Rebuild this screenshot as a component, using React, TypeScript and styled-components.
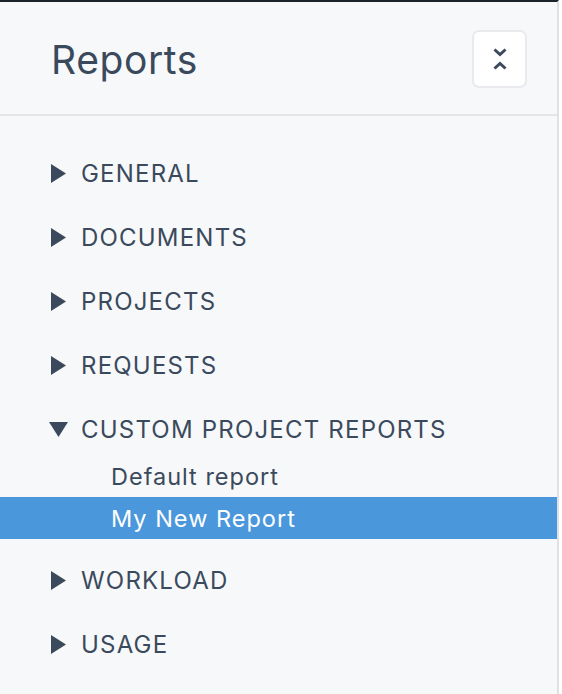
import React, { useState } from "react";
import styled, { createGlobalStyle } from "styled-components";

const Global = createGlobalStyle`
  html, body { margin: 0; padding: 0; background: #ffffff; }
  body { font-family: Inter, "Liberation Sans", Arial, sans-serif; }
`;

const Panel = styled.aside`
  width: 557px;
  height: 692px;
  background: #f7f8fa;
  border-top: 2px solid #1d232a;
  border-right: 2px solid #dfe1e4;
  color: #3a4a5c;
`;

const Header = styled.header`
  height: 112px;
  display: flex;
  align-items: center;
  justify-content: space-between;
  padding: 0 30px 0 51px;
  border-bottom: 2px solid #e3e5e8;
`;

const Title = styled.h1`
  margin: 3px 0 0;
  font-size: 39px;
  font-weight: 400;
  letter-spacing: 0.6px;
  color: #3a4a5c;
`;

const CollapseButton = styled.button`
  width: 55px;
  height: 58px;
  margin-top: 2px;
  display: flex;
  align-items: center;
  justify-content: center;
  background: #ffffff;
  border: 2px solid #e8eaed;
  border-radius: 7px;
  padding: 0;
  cursor: pointer;
`;

const List = styled.nav`
  display: flex;
  flex-direction: column;
  gap: 20px;
  padding-top: 35px;
`;

const Section = styled.div`
  display: flex;
  flex-direction: column;
`;

const SectionHead = styled.div`
  height: 44px;
  display: flex;
  align-items: center;
  padding-left: 51px;
  gap: 15px;
  font-size: 24px;
  letter-spacing: 1.2px;
  text-transform: uppercase;
  cursor: pointer;
`;

const Caret = styled.span<{ $open: boolean }>`
  width: 15px;
  height: 20px;
  display: flex;
  align-items: center;
  justify-content: center;
  flex: none;
  svg { transform: rotate(${(p) => (p.$open ? 90 : 0)}deg); }
`;

const SubList = styled.div`
  display: flex;
  flex-direction: column;
  margin: 4px 0 -1px;
`;

const SubItem = styled.div<{ $active?: boolean }>`
  height: 42px;
  display: flex;
  align-items: center;
  padding-left: 111px;
  font-size: 23.5px;
  letter-spacing: 1px;
  background: ${(p) => (p.$active ? "#4a97dc" : "transparent")};
  color: ${(p) => (p.$active ? "#ffffff" : "#3a4a5c")};
  cursor: pointer;
`;

const Triangle = () => (
  <svg width="15" height="19" viewBox="0 0 15 19">
    <path d="M0 0 L15 9.5 L0 19 Z" fill="#3a4a5c" />
  </svg>
);

const CollapseIcon = () => (
  <svg width="14" height="22" viewBox="0 0 14 22" fill="none" stroke="#3a4a5c" strokeWidth="3" strokeLinejoin="miter">
    <polyline points="1.5,1.5 7,6.5 12.5,1.5" />
    <polyline points="1.5,20.5 7,15.5 12.5,20.5" />
  </svg>
);

type Group = { name: string; items?: string[] };

const groups: Group[] = [
  { name: "General" },
  { name: "Documents" },
  { name: "Projects" },
  { name: "Requests" },
  { name: "Custom Project Reports", items: ["Default report", "My New Report"] },
  { name: "Workload" },
  { name: "Usage" },
];

export default function App() {
  const [open, setOpen] = useState<string>("Custom Project Reports");
  const [active, setActive] = useState<string>("My New Report");

  return (
    <>
      <Global />
      <Panel>
        <Header>
          <Title>Reports</Title>
          <CollapseButton aria-label="Collapse all">
            <CollapseIcon />
          </CollapseButton>
        </Header>
        <List>
          {groups.map((g) => {
            const isOpen = open === g.name;
            return (
              <Section key={g.name}>
                <SectionHead onClick={() => setOpen(isOpen ? "" : g.name)}>
                  <Caret $open={isOpen}>
                    <Triangle />
                  </Caret>
                  {g.name}
                </SectionHead>
                {isOpen && g.items && (
                  <SubList>
                    {g.items.map((it) => (
                      <SubItem key={it} $active={active === it} onClick={() => setActive(it)}>
                        {it}
                      </SubItem>
                    ))}
                  </SubList>
                )}
              </Section>
            );
          })}
        </List>
      </Panel>
    </>
  );
}
